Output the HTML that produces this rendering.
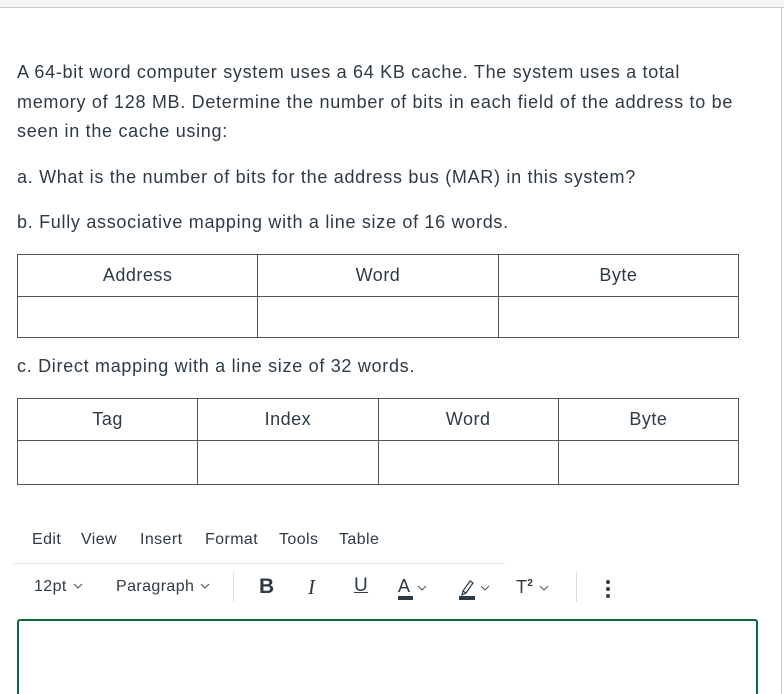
<!DOCTYPE html>
<html><head><style>
html,body{margin:0;width:784px;height:694px;overflow:hidden}
body{background:#fff;font-family:"Liberation Sans",sans-serif;color:#2d3b45;position:relative}
.top{position:absolute;left:0;top:0;width:784px;height:7px;background:#f5f5f5;border-bottom:1px solid #c7cdd1}
.rb{position:absolute;left:781px;top:7px;width:1px;height:700px;background:#c7cdd1}
.t{position:absolute;left:17px;font-size:18px;letter-spacing:0.7px;white-space:nowrap;color:#2d3b45}
table{position:absolute;left:17px;border-collapse:collapse;width:722px;table-layout:fixed}
td{border:1px solid #555;text-align:center;font-size:18px;letter-spacing:0.5px;padding:0;color:#2d3b45}
.m{position:absolute;font-size:16px;letter-spacing:0.4px;color:#2d3b45;white-space:nowrap}
.cv{display:inline-block;vertical-align:middle;margin-left:6px}
</style></head><body>
<div class="top"></div><div class="rb"></div>
<div class="t" style="top:62px">A 64-bit word computer system uses a 64 KB cache. The system uses a total</div>
<div class="t" style="top:92px">memory of 128 MB. Determine the number of bits in each field of the address to be</div>
<div class="t" style="top:121px">seen in the cache using:</div>
<div class="t" style="top:167px">a. What is the number of bits for the address bus (MAR) in this system?</div>
<div class="t" style="top:212px">b. Fully associative mapping with a line size of 16 words.</div>
<table style="top:254px"><tr style="height:42px"><td>Address</td><td>Word</td><td>Byte</td></tr><tr style="height:41px"><td></td><td></td><td></td></tr></table>
<div class="t" style="top:356px">c. Direct mapping with a line size of 32 words.</div>
<table style="top:398px"><tr style="height:42px"><td>Tag</td><td>Index</td><td>Word</td><td>Byte</td></tr><tr style="height:44px"><td></td><td></td><td></td><td></td></tr></table>
<div class="m" style="left:32px;top:531px">Edit</div>
<div class="m" style="left:81px;top:531px">View</div>
<div class="m" style="left:140px;top:531px">Insert</div>
<div class="m" style="left:205px;top:531px">Format</div>
<div class="m" style="left:279px;top:531px">Tools</div>
<div class="m" style="left:339px;top:531px">Table</div>
<div style="position:absolute;left:12px;top:563px;width:493px;height:1px;background:#e8eaec"></div>
<svg width="0" height="0" style="position:absolute"><defs><path id="c" d="M1 1 L5 5 L9 1" fill="none" stroke="#555" stroke-width="1.1"/></defs></svg>
<div class="m" style="left:34px;top:578px">12pt<svg class="cv" width="10" height="7"><use href="#c"/></svg></div>
<div class="m" style="left:116px;top:578px">Paragraph<svg class="cv" width="10" height="7"><use href="#c"/></svg></div>
<div style="position:absolute;left:233px;top:572px;width:1px;height:30px;background:#ddd"></div>
<div class="m" style="left:259px;top:575px;font-size:21px;font-weight:bold">B</div>
<div class="m" style="left:308px;top:575px;font-size:21px;font-style:italic;font-family:'Liberation Serif',serif">I</div>
<div class="m" style="left:354px;top:575px;font-size:19px;text-decoration:underline">U</div>
<div class="m" style="left:398px;top:576px;font-size:18px">A</div>
<div style="position:absolute;left:398px;top:596px;width:15px;height:4px;background:#2d3b45"></div>
<svg style="position:absolute;left:417px;top:585px" width="10" height="7"><use href="#c"/></svg>
<svg style="position:absolute;left:459px;top:578px" width="20" height="23"><path d="M4 13 L11 3 L14 5 L7 15 Z M4 13 L3 17 L7 15" fill="none" stroke="#2d3b45" stroke-width="1.2"/><rect x="0" y="18" width="16" height="4" fill="#2d3b45"/></svg>
<svg style="position:absolute;left:480px;top:585px" width="10" height="7"><use href="#c"/></svg>
<div class="m" style="left:516px;top:577px;font-size:18px">T<sup style="font-size:10px;font-weight:bold">2</sup></div>
<svg style="position:absolute;left:539px;top:585px" width="10" height="7"><use href="#c"/></svg>
<div style="position:absolute;left:576px;top:572px;width:1px;height:30px;background:#ddd"></div>
<div style="position:absolute;left:606px;top:580px;width:4px;height:4px;border-radius:2px;background:#2d3b45;box-shadow:0 7px 0 #2d3b45,0 14px 0 #2d3b45"></div>
<div style="position:absolute;left:17px;top:619px;width:737px;height:90px;border:2px solid #0b6b3a;border-radius:3px"></div>
</body></html>
